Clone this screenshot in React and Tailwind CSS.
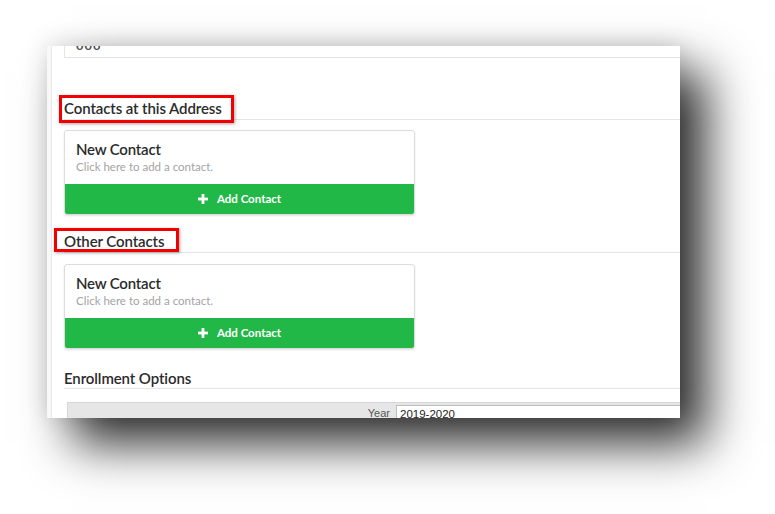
import React from 'react'

function Plus () {
  return (
    <svg width="10" height="10" viewBox="0 0 10 10" className="shrink-0">
      <rect x="3.6" y="0" width="2.8" height="10" fill="#fff" />
      <rect x="0" y="3.6" width="10" height="2.8" fill="#fff" />
    </svg>
  )
}

function ContactCard () {
  return (
    <div className="w-[351px] rounded-[3px] border border-[#dcdcdc] overflow-hidden shadow-[0_1px_2px_rgba(0,0,0,0.12)]">
      <div className="h-[53px] px-[11px] pt-[9px]">
        <div className="text-[15px] leading-[18px] font-semibold text-[#2b2b2b] tracking-[-0.2px]">New Contact</div>
        <div className="text-[11.5px] leading-[15px] text-[#a3a3a3] mt-[1px]">Click here to add a contact.</div>
      </div>
      <div className="h-[30px] bg-[#22b847] flex items-center justify-center gap-[9px]">
        <Plus />
        <span className="text-[11.5px] font-bold text-white">Add Contact</span>
      </div>
    </div>
  )
}

function Heading ({ children, className = '', mark }) {
  return (
    <div className={`relative border-b border-[#e6e6e6] ${className}`}>
      <div className="text-[15px] leading-[20px] font-semibold text-[#2b2b2b] tracking-[-0.1px]">{children}</div>
      {mark}
    </div>
  )
}

export default function App () {
  return (
    <div className="w-[775px] h-[514px] bg-white overflow-hidden pt-[46px] pl-[47px]" style={{ fontFamily: 'Lato, "Open Sans", sans-serif' }}>
      <div className="w-[633px] h-[372px] bg-white overflow-hidden flex shadow-[26px_26px_46px_rgba(0,0,0,0.82),0_-2px_22px_rgba(0,0,0,0.12)]">
        <div className="w-[4px] bg-[#f8f8f8] shrink-0" />
        <div className="w-[1px] bg-[#e8e8e8] shrink-0" />
        <div className="flex-1 pl-[12px] flex flex-col">
          <div className="-mt-[9px] h-[21px] shrink-0 border border-[#e6e6e6] border-r-0 pl-[11px] text-[13px] leading-[14px] text-[#555] font-bold tracking-[1px]">ooo</div>

          <Heading
            className="mt-[40px] pb-[1px]"
            mark={<div className="absolute -left-[5px] -top-[3px] w-[175px] h-[28px] border-[3px] border-[#f20000] shadow-[1px_1px_3px_rgba(0,0,0,0.35)]" />}
          >
            Contacts at this Address
          </Heading>
          <div className="mt-[10px]">
            <ContactCard />
          </div>

          <Heading
            className="mt-[16px] pb-[1px]"
            mark={<div className="absolute -left-[10px] -top-[3px] w-[125px] h-[24px] border-[3px] border-[#f20000] shadow-[1px_1px_3px_rgba(0,0,0,0.35)]" />}
          >
            Other Contacts
          </Heading>
          <div className="mt-[11px]">
            <ContactCard />
          </div>

          <Heading className="mt-[19px]">Enrollment Options</Heading>

          <div className="mt-[13px] ml-[3px] h-[30px] shrink-0 bg-[#e6e6e6] border border-[#d6d6d6] border-r-0 flex pt-[2px]" style={{ fontFamily: '"Liberation Sans", Arial, sans-serif' }}>
            <div className="w-[328px] text-right pr-[6px] text-[11px] leading-[16px] text-[#555]">Year</div>
            <div className="flex-1 h-[18px] bg-white border border-[#bdbdbd] border-r-0 pl-[3px] text-[11.5px] leading-[16px] text-[#222]">2019-2020</div>
          </div>
        </div>
      </div>
    </div>
  )
}
